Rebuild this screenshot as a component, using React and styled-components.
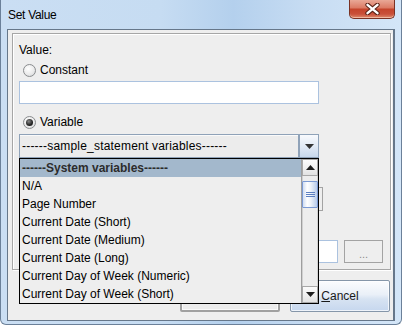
import React from "react";
import styled, { createGlobalStyle } from "styled-components";

const Global = createGlobalStyle`
  html, body { margin: 0; padding: 0; background: #ffffff; }
  body { font-family: "Liberation Sans", Arial, sans-serif; font-size: 12px; color: #000; }
  * { box-sizing: border-box; }
`;

const Window = styled.div`
  width: 402px;
  height: 325px;
  display: flex;
  flex-direction: column;
  border: 1px solid #6b8099;
  border-top: none;
  border-radius: 0 0 6px 6px;
  overflow: hidden;
  background: linear-gradient(
    90deg,
    #cadef3 0%,
    #c6dcf2 40%,
    #b4d0ed 58%,
    #c8ddf3 78%,
    #d4e6f8 100%
  );
`;

const TitleBar = styled.div`
  height: 29px;
  flex: none;
  display: flex;
  justify-content: space-between;
  align-items: flex-start;
`;

const Title = styled.div`
  margin: 8px 0 0 7px;
  font-size: 12px;
  line-height: 14px;
  letter-spacing: -0.3px;
  color: #000;
`;

const CloseButton = styled.div`
  width: 46px;
  height: 19px;
  margin-right: 6px;
  display: flex;
  align-items: center;
  justify-content: center;
  border: 1px solid #7a3224;
  border-top: none;
  border-radius: 0 0 5px 5px;
  background: linear-gradient(
    180deg,
    #e9a896 0%,
    #dc7c66 42%,
    #c5452c 52%,
    #c9503a 78%,
    #dd8a6c 100%
  );
  box-shadow: inset 0 -1px 0 rgba(255, 220, 200, 0.6);
`;

const Client = styled.div`
  flex: 1;
  margin: 0 6px 3px 6px;
  border: 1px solid #66778a;
  border-right-width: 2px;
  background: #eeeeee;
  display: flex;
  flex-direction: column;
  padding: 3px 3px 0 4px;
`;

const Panel = styled.div`
  width: 379px;
  height: 237px;
  flex: none;
  border: 1px solid #a6a6a6;
  box-shadow: inset 1px 1px 0 #ffffff, 1px 1px 0 #ffffff;
  padding: 9px 0 0 6px;
  display: flex;
  flex-direction: column;
  align-items: flex-start;
`;

const Label = styled.div`
  line-height: 14px;
  font-size: 12px;
`;

const RadioRow = styled.div`
  margin-top: ${(p) => p.$mt}px;
  height: 20px;
  padding-left: 4px;
  display: flex;
  align-items: center;
  gap: 4px;
  line-height: 14px;
`;

const Radio = styled.span`
  position: relative;
  width: 13px;
  height: 13px;
  border-radius: 50%;
  border: 1px solid #8a8c8e;
  background: radial-gradient(circle at 40% 35%, #ffffff 0%, #ebebeb 55%, #cfd2d6 100%);
  &::after {
    content: "";
    display: ${(p) => (p.$checked ? "block" : "none")};
    position: absolute;
    left: 2px;
    top: 2px;
    width: 7px;
    height: 7px;
    border-radius: 50%;
    background: radial-gradient(circle at 40% 35%, #8a8a8a 0%, #2a2a2a 55%, #000 100%);
  }
`;

const TextField = styled.div`
  margin-top: ${(p) => p.$mt || 0}px;
  width: ${(p) => p.$w}px;
  height: 23px;
  flex: none;
  background: #ffffff;
  border: 1px solid #abc2df;
`;

const ComboWrap = styled.div`
  position: relative;
  margin-top: 2px;
  width: 300px;
  height: 24px;
  display: flex;
`;

const ComboField = styled.div`
  flex: 1;
  border: 1px solid #8fa2b8;
  background: #ececec;
  box-shadow: inset 0 1px 0 #fafafa;
  padding-left: 2px;
  line-height: 22px;
  letter-spacing: 0.2px;
  white-space: nowrap;
  overflow: hidden;
`;

const ComboArrow = styled.div`
  width: 20px;
  flex: none;
  border: 1px solid #8fa2b8;
  background: linear-gradient(180deg, #f8fafd 0%, #e2eaf5 50%, #c8d8ec 100%);
  display: flex;
  align-items: center;
  justify-content: center;
`;

const Popup = styled.div`
  position: absolute;
  top: 24px;
  left: 0;
  width: 300px;
  height: 146px;
  border: 1px solid #000;
  background: #eeeeee;
  display: flex;
  z-index: 10;
`;

const List = styled.div`
  flex: 1;
  display: flex;
  flex-direction: column;
`;

const Item = styled.div`
  height: 18px;
  padding: 1px 0 0 2px;
  line-height: 17px;
  white-space: nowrap;
  font-weight: ${(p) => (p.$selected ? "bold" : "normal")};
  background: ${(p) => (p.$selected ? "#a3b8cc" : "transparent")};
  color: ${(p) => (p.$selected ? "#2c2c2c" : "#000")};
`;

const ScrollBar = styled.div`
  width: 17px;
  flex: none;
  border-left: 1px solid #9e9e9e;
  display: flex;
  flex-direction: column;
`;

const ScrollButton = styled.div`
  height: 17px;
  flex: none;
  border: 1px solid #a8a8a8;
  background: linear-gradient(180deg, #fbfbfb 0%, #eeeeee 60%, #e2e2e2 100%);
  display: flex;
  align-items: center;
  justify-content: center;
`;

const Track = styled.div`
  flex: 1;
  border-left: 1px solid #d0d0d0;
  border-right: 1px solid #d0d0d0;
  background: #ededed;
  padding-top: 5px;
`;

const Thumb = styled.div`
  height: 27px;
  margin: 0 -1px;
  border: 1px solid #7b9ad4;
  border-radius: 1px;
  background: linear-gradient(
    90deg,
    #cfdcf1 0%,
    #ffffff 30%,
    #eef3fa 55%,
    #b7cbeb 100%
  );
  display: flex;
  flex-direction: column;
  align-items: center;
  justify-content: center;
  gap: 1px;
`;

const GripLine = styled.span`
  width: 9px;
  height: 1px;
  background: #5d80c2;
`;

const HiddenRow = styled.div`
  margin-top: 29px;
  height: ${(p) => p.$h}px;
  width: ${(p) => p.$w}px;
  display: flex;
  justify-content: ${(p) => p.$justify || "flex-start"};
  gap: 6px;
  flex: none;
`;

const SmallButton = styled.div`
  width: ${(p) => p.$w}px;
  height: 100%;
  border: 1px solid #a3a3a3;
  background: #eeeeee;
  display: flex;
  align-items: center;
  justify-content: center;
  font-size: 11px;
  line-height: 12px;
  color: #8c8c8c;
  padding-top: 5px;
`;

const ButtonRow = styled.div`
  margin-top: 10px;
  height: 32px;
  display: flex;
  justify-content: flex-end;
  gap: 10px;
`;

const DialogButton = styled.div`
  width: 100px;
  height: 32px;
  border: ${(p) => (p.$plain ? "2px solid #a0a0a0" : "1px solid #8596a9")};
  border-radius: 2px;
  background: ${(p) =>
    p.$plain
      ? "#ececec"
      : "linear-gradient(180deg, #fbfcfe 0%, #eaf0f8 45%, #d7e3f2 60%, #c6d7ee 100%)"};
  box-shadow: inset 0 0 0 1px rgba(255, 255, 255, 0.7);
  display: flex;
  align-items: center;
  justify-content: center;
  font-size: 12px;
  color: #1a1a1a;
  u { text-decoration: underline; }
`;

const TriangleDown = ({ w = 9, h = 5, color = "#222" }) => (
  <svg width={w} height={h} viewBox={`0 0 ${w} ${h}`}>
    <polygon points={`0,0 ${w},0 ${w / 2},${h}`} fill={color} />
  </svg>
);

const TriangleUp = ({ w = 9, h = 5, color = "#222" }) => (
  <svg width={w} height={h} viewBox={`0 0 ${w} ${h}`}>
    <polygon points={`0,${h} ${w},${h} ${w / 2},0`} fill={color} />
  </svg>
);

const items = [
  "N/A",
  "Page Number",
  "Current Date (Short)",
  "Current Date (Medium)",
  "Current Date (Long)",
  "Current Day of Week (Numeric)",
  "Current Day of Week (Short)",
];

export default function App() {
  return (
    <>
      <Global />
      <Window>
        <TitleBar>
          <Title>Set Value</Title>
          <CloseButton>
            <svg width="15" height="12" viewBox="0 0 15 12">
              <path d="M2.5 1.8 L12.5 10.2 M12.5 1.8 L2.5 10.2" stroke="#5a2418" strokeWidth="4.4" strokeLinecap="round" />
              <path d="M2.5 1.8 L12.5 10.2 M12.5 1.8 L2.5 10.2" stroke="#ffffff" strokeWidth="2.4" strokeLinecap="round" />
            </svg>
          </CloseButton>
        </TitleBar>
        <Client>
          <Panel>
            <Label>Value:</Label>
            <RadioRow $mt={3}>
              <Radio />
              <span>Constant</span>
            </RadioRow>
            <TextField $mt={1} $w={300} />
            <RadioRow $mt={8}>
              <Radio $checked />
              <span>Variable</span>
            </RadioRow>
            <ComboWrap>
              <ComboField>------sample_statement variables------</ComboField>
              <ComboArrow>
                <TriangleDown w={9} h={5} color="#333" />
              </ComboArrow>
              <Popup>
                <List>
                  <Item $selected>------System variables------</Item>
                  {items.map((t) => (
                    <Item key={t}>{t}</Item>
                  ))}
                </List>
                <ScrollBar>
                  <ScrollButton>
                    <TriangleUp w={9} h={5} color="#1e1e1e" />
                  </ScrollButton>
                  <Track>
                    <Thumb>
                      <GripLine />
                      <GripLine />
                      <GripLine />
                    </Thumb>
                  </Track>
                  <ScrollButton>
                    <TriangleDown w={9} h={5} color="#1e1e1e" />
                  </ScrollButton>
                </ScrollBar>
              </Popup>
            </ComboWrap>
            <HiddenRow $h={24} $w={304} $justify="flex-end">
              <SmallButton $w={70} />
            </HiddenRow>
            <HiddenRow $h={23}>
              <TextField $w={319} />
              <SmallButton $w={39}>...</SmallButton>
            </HiddenRow>
          </Panel>
          <ButtonRow>
            <DialogButton $plain />
            <DialogButton>
              <span>
                <u>C</u>ancel
              </span>
            </DialogButton>
          </ButtonRow>
        </Client>
      </Window>
    </>
  );
}
